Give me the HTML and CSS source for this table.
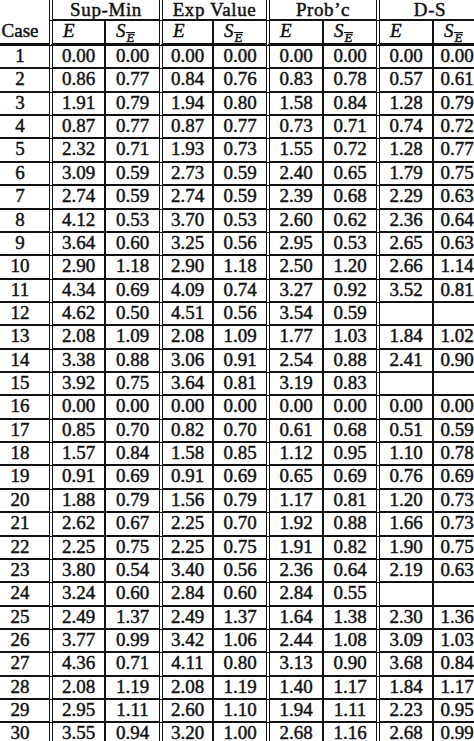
FILE: index.html
```html
<!DOCTYPE html>
<html>
<head>
<meta charset="utf-8">
<link rel="stylesheet" href="styles.css">
</head>
<body>
<table class="tbl">
<colgroup>
<col class="w-case"><col class="w-e1"><col class="w-s1"><col class="w-e2"><col class="w-s2"><col class="w-e3"><col class="w-s3"><col class="w-e4"><col class="w-s4">
</colgroup>
<thead>
<tr class="h1">
<th class="case-top"></th>
<th class="g grp" colspan="2">Sup-Min</th>
<th class="g grp" colspan="2">Exp Value</th>
<th class="g grp" colspan="2">Prob’c</th>
<th class="g grp" colspan="2">D-S</th>
</tr>
<tr class="h2">
<th class="case">Case</th>
<th class="g hl"><i class="ev">E</i></th>
<th class="s hl"><span class="se"><i>S</i><sub><i class="ov">E</i></sub></span></th>
<th class="g hl"><i class="ev">E</i></th>
<th class="s hl"><span class="se"><i>S</i><sub><i class="ov">E</i></sub></span></th>
<th class="g hl"><i class="ev">E</i></th>
<th class="s hl"><span class="se"><i>S</i><sub><i class="ov">E</i></sub></span></th>
<th class="g hl"><i class="ev">E</i></th>
<th class="s hl"><span class="se"><i>S</i><sub><i class="ov">E</i></sub></span></th>
</tr>
</thead>
<tbody>
<tr><td class="case">1</td><td class="g">0.00</td><td class="s">0.00</td><td class="g">0.00</td><td class="s">0.00</td><td class="g">0.00</td><td class="s">0.00</td><td class="g">0.00</td><td class="s">0.00</td></tr>
<tr><td class="case">2</td><td class="g">0.86</td><td class="s">0.77</td><td class="g">0.84</td><td class="s">0.76</td><td class="g">0.83</td><td class="s">0.78</td><td class="g">0.57</td><td class="s">0.61</td></tr>
<tr><td class="case">3</td><td class="g">1.91</td><td class="s">0.79</td><td class="g">1.94</td><td class="s">0.80</td><td class="g">1.58</td><td class="s">0.84</td><td class="g">1.28</td><td class="s">0.79</td></tr>
<tr><td class="case">4</td><td class="g">0.87</td><td class="s">0.77</td><td class="g">0.87</td><td class="s">0.77</td><td class="g">0.73</td><td class="s">0.71</td><td class="g">0.74</td><td class="s">0.72</td></tr>
<tr><td class="case">5</td><td class="g">2.32</td><td class="s">0.71</td><td class="g">1.93</td><td class="s">0.73</td><td class="g">1.55</td><td class="s">0.72</td><td class="g">1.28</td><td class="s">0.77</td></tr>
<tr><td class="case">6</td><td class="g">3.09</td><td class="s">0.59</td><td class="g">2.73</td><td class="s">0.59</td><td class="g">2.40</td><td class="s">0.65</td><td class="g">1.79</td><td class="s">0.75</td></tr>
<tr><td class="case">7</td><td class="g">2.74</td><td class="s">0.59</td><td class="g">2.74</td><td class="s">0.59</td><td class="g">2.39</td><td class="s">0.68</td><td class="g">2.29</td><td class="s">0.63</td></tr>
<tr><td class="case">8</td><td class="g">4.12</td><td class="s">0.53</td><td class="g">3.70</td><td class="s">0.53</td><td class="g">2.60</td><td class="s">0.62</td><td class="g">2.36</td><td class="s">0.64</td></tr>
<tr><td class="case">9</td><td class="g">3.64</td><td class="s">0.60</td><td class="g">3.25</td><td class="s">0.56</td><td class="g">2.95</td><td class="s">0.53</td><td class="g">2.65</td><td class="s">0.63</td></tr>
<tr><td class="case">10</td><td class="g">2.90</td><td class="s">1.18</td><td class="g">2.90</td><td class="s">1.18</td><td class="g">2.50</td><td class="s">1.20</td><td class="g">2.66</td><td class="s">1.14</td></tr>
<tr><td class="case">11</td><td class="g">4.34</td><td class="s">0.69</td><td class="g">4.09</td><td class="s">0.74</td><td class="g">3.27</td><td class="s">0.92</td><td class="g">3.52</td><td class="s">0.81</td></tr>
<tr><td class="case">12</td><td class="g">4.62</td><td class="s">0.50</td><td class="g">4.51</td><td class="s">0.56</td><td class="g">3.54</td><td class="s">0.59</td><td class="g"></td><td class="s"></td></tr>
<tr><td class="case">13</td><td class="g">2.08</td><td class="s">1.09</td><td class="g">2.08</td><td class="s">1.09</td><td class="g">1.77</td><td class="s">1.03</td><td class="g">1.84</td><td class="s">1.02</td></tr>
<tr><td class="case">14</td><td class="g">3.38</td><td class="s">0.88</td><td class="g">3.06</td><td class="s">0.91</td><td class="g">2.54</td><td class="s">0.88</td><td class="g">2.41</td><td class="s">0.90</td></tr>
<tr><td class="case">15</td><td class="g">3.92</td><td class="s">0.75</td><td class="g">3.64</td><td class="s">0.81</td><td class="g">3.19</td><td class="s">0.83</td><td class="g"></td><td class="s"></td></tr>
<tr><td class="case">16</td><td class="g">0.00</td><td class="s">0.00</td><td class="g">0.00</td><td class="s">0.00</td><td class="g">0.00</td><td class="s">0.00</td><td class="g">0.00</td><td class="s">0.00</td></tr>
<tr><td class="case">17</td><td class="g">0.85</td><td class="s">0.70</td><td class="g">0.82</td><td class="s">0.70</td><td class="g">0.61</td><td class="s">0.68</td><td class="g">0.51</td><td class="s">0.59</td></tr>
<tr><td class="case">18</td><td class="g">1.57</td><td class="s">0.84</td><td class="g">1.58</td><td class="s">0.85</td><td class="g">1.12</td><td class="s">0.95</td><td class="g">1.10</td><td class="s">0.78</td></tr>
<tr><td class="case">19</td><td class="g">0.91</td><td class="s">0.69</td><td class="g">0.91</td><td class="s">0.69</td><td class="g">0.65</td><td class="s">0.69</td><td class="g">0.76</td><td class="s">0.69</td></tr>
<tr><td class="case">20</td><td class="g">1.88</td><td class="s">0.79</td><td class="g">1.56</td><td class="s">0.79</td><td class="g">1.17</td><td class="s">0.81</td><td class="g">1.20</td><td class="s">0.73</td></tr>
<tr><td class="case">21</td><td class="g">2.62</td><td class="s">0.67</td><td class="g">2.25</td><td class="s">0.70</td><td class="g">1.92</td><td class="s">0.88</td><td class="g">1.66</td><td class="s">0.73</td></tr>
<tr><td class="case">22</td><td class="g">2.25</td><td class="s">0.75</td><td class="g">2.25</td><td class="s">0.75</td><td class="g">1.91</td><td class="s">0.82</td><td class="g">1.90</td><td class="s">0.75</td></tr>
<tr><td class="case">23</td><td class="g">3.80</td><td class="s">0.54</td><td class="g">3.40</td><td class="s">0.56</td><td class="g">2.36</td><td class="s">0.64</td><td class="g">2.19</td><td class="s">0.63</td></tr>
<tr><td class="case">24</td><td class="g">3.24</td><td class="s">0.60</td><td class="g">2.84</td><td class="s">0.60</td><td class="g">2.84</td><td class="s">0.55</td><td class="g"></td><td class="s"></td></tr>
<tr><td class="case">25</td><td class="g">2.49</td><td class="s">1.37</td><td class="g">2.49</td><td class="s">1.37</td><td class="g">1.64</td><td class="s">1.38</td><td class="g">2.30</td><td class="s">1.36</td></tr>
<tr><td class="case">26</td><td class="g">3.77</td><td class="s">0.99</td><td class="g">3.42</td><td class="s">1.06</td><td class="g">2.44</td><td class="s">1.08</td><td class="g">3.09</td><td class="s">1.03</td></tr>
<tr><td class="case">27</td><td class="g">4.36</td><td class="s">0.71</td><td class="g">4.11</td><td class="s">0.80</td><td class="g">3.13</td><td class="s">0.90</td><td class="g">3.68</td><td class="s">0.84</td></tr>
<tr><td class="case">28</td><td class="g">2.08</td><td class="s">1.19</td><td class="g">2.08</td><td class="s">1.19</td><td class="g">1.40</td><td class="s">1.17</td><td class="g">1.84</td><td class="s">1.17</td></tr>
<tr><td class="case">29</td><td class="g">2.95</td><td class="s">1.11</td><td class="g">2.60</td><td class="s">1.10</td><td class="g">1.94</td><td class="s">1.11</td><td class="g">2.23</td><td class="s">0.95</td></tr>
<tr><td class="case">30</td><td class="g">3.55</td><td class="s">0.94</td><td class="g">3.20</td><td class="s">1.00</td><td class="g">2.68</td><td class="s">1.16</td><td class="g">2.68</td><td class="s">0.99</td></tr>
</tbody>
</table>
</body>
</html>
```

FILE: styles.css
```css
html, body {
  margin: 0;
  padding: 0;
  background: #ffffff;
  overflow: hidden;
}

.tbl {
  border-collapse: separate;
  border-spacing: 0;
  table-layout: fixed;
  width: 480px;
  font-family: "Liberation Serif", "Times New Roman", serif;
  font-size: 19px;
  color: #111111;
  -webkit-text-stroke: 0.45px #111111;
}

.w-case { width: 49px; }
.w-e1 { width: 55px; }
.w-s1 { width: 55px; }
.w-e2 { width: 53px; }
.w-s2 { width: 54px; }
.w-e3 { width: 56px; }
.w-s3 { width: 54px; }
.w-e4 { width: 56px; }
.w-s4 { width: 48px; }

.tbl th,
.tbl td {
  padding: 0;
  box-sizing: border-box;
  line-height: 19px;
  vertical-align: top;
  text-align: center;
  font-weight: normal;
  white-space: nowrap;
  border-bottom: 2px solid #111111;
}

.tbl td {
  height: 23.36px;
}

.h1 th {
  height: 20px;
}

.h2 th {
  height: 24px;
  border-bottom-width: 3px;
}

.tbl .grp {
  letter-spacing: 0.6px;
}

.g {
  border-left: 4px double #111111;
}

.s {
  border-left: 2px solid #111111;
}

.tbl .case-top {
  border-bottom: none;
}

.tbl .case {
  padding-right: 9px;
}

.tbl .hl {
  text-align: left;
  padding-left: 10px;
}

.ev {
  font-size: 19px;
}

.se sub {
  font-size: 13px;
  vertical-align: -5px;
  line-height: 0;
}

.ov {
  display: inline-block;
  border-top: 1.5px solid #111111;
  line-height: 10px;
  padding: 0 1px;
}
```
